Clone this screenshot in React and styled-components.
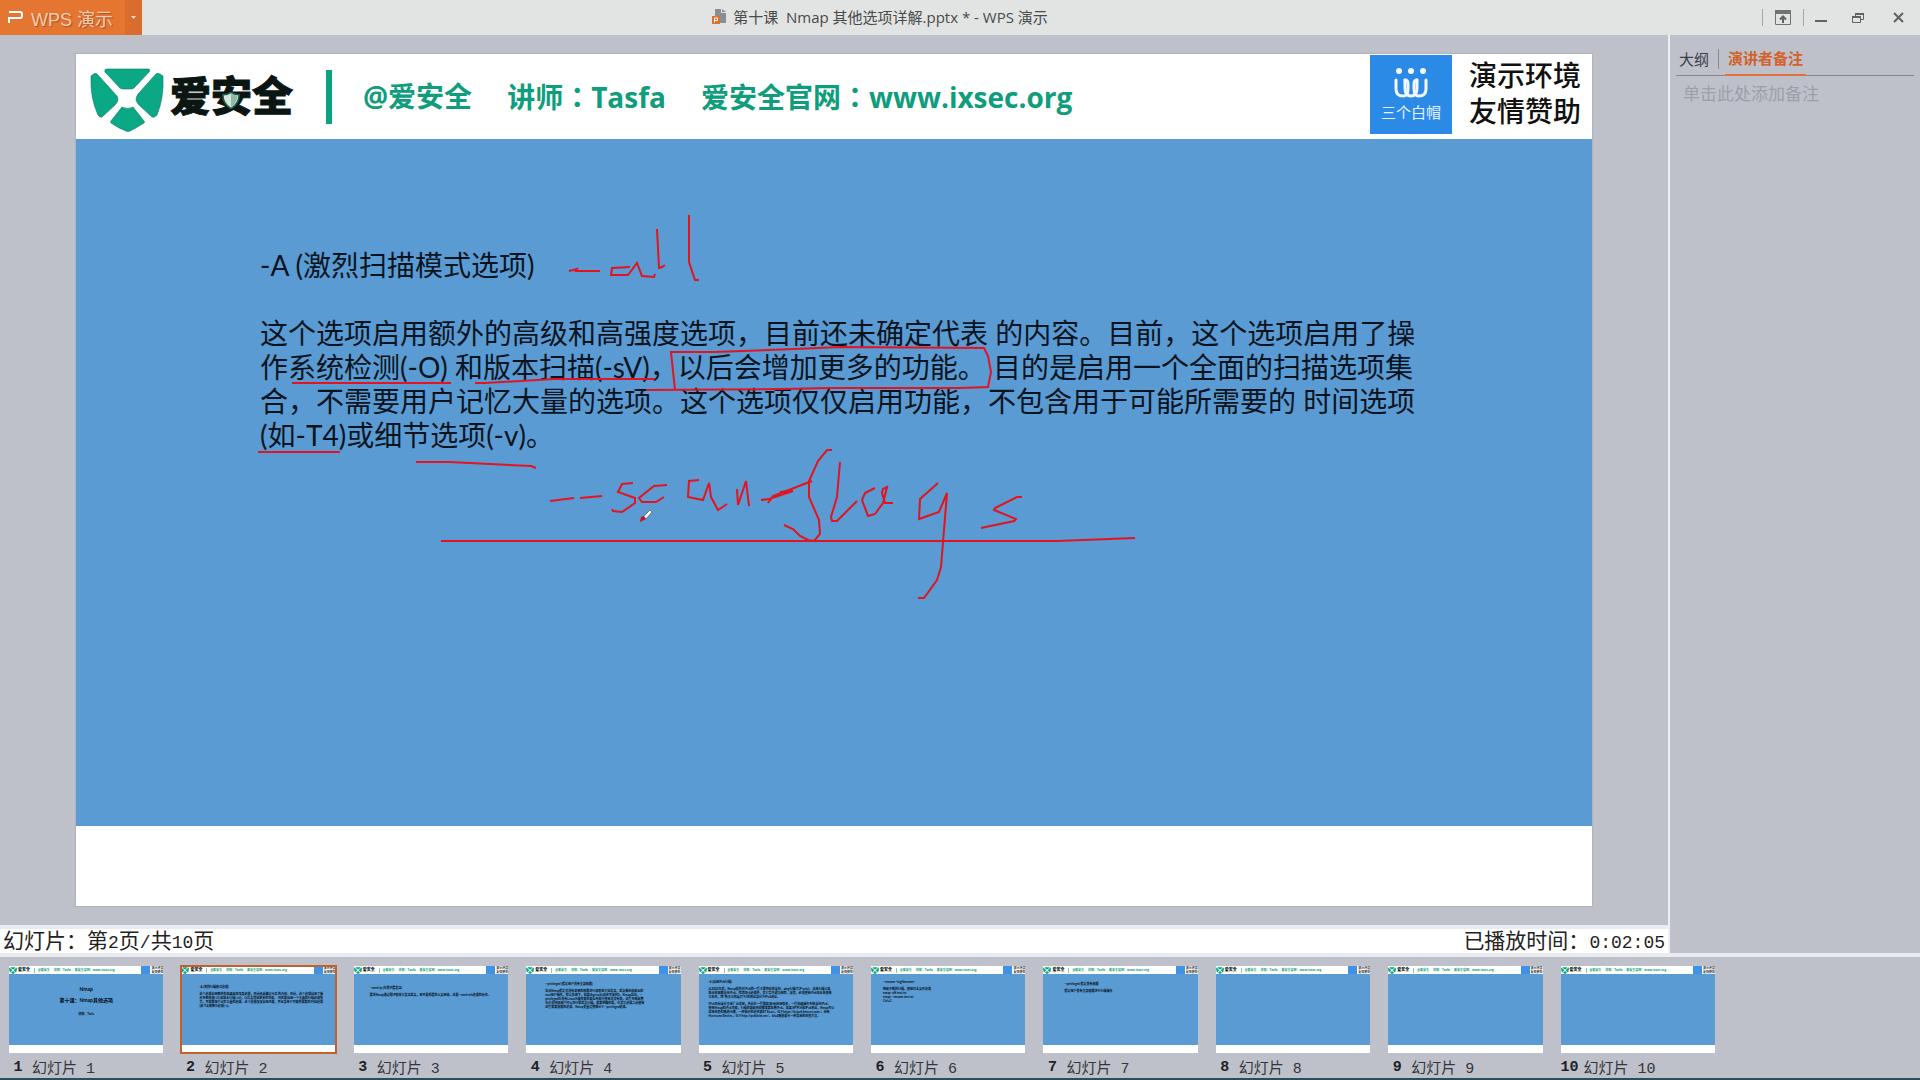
import { useState } from 'react';
import styled, { createGlobalStyle } from 'styled-components';

const GlobalStyle = createGlobalStyle`
  * {
    box-sizing: border-box;
  }
  body {
    margin: 0;
    background-color: #bec1ca;
    font-family: 'Open Sans', 'Noto Sans CJK SC', sans-serif;
  }
  button {
    padding: 0;
    border: none;
    background: none;
    font-family: inherit;
    color: inherit;
    cursor: pointer;
  }
  p, h1, h2 {
    margin: 0;
    font-weight: 400;
  }
`;

const Window = styled.div`
  min-height: 100vh;
  display: flex;
  flex-direction: column;
  border-bottom: 2px solid #2b4d5a;
`;

const TitleBar = styled.header`
  display: flex;
  align-items: stretch;
  height: 35px;
  background-color: #e1e4e3;
`;

const AppMenu = styled.div`
  display: flex;
  width: 142px;
  color: #f6cfb2;
  background-color: #e57632;
`;

const AppButton = styled.button`
  flex: 1;
  display: flex;
  align-items: center;
  gap: 8px;
  padding-left: 8px;
  font-family: 'Liberation Sans', 'Noto Sans CJK SC', sans-serif;
  font-size: 18px;
  white-space: nowrap;
  text-shadow: 1px 1px 1px #a9501c;
`;

const AppArrow = styled.button`
  width: 17px;
  display: flex;
  align-items: center;
  justify-content: center;
  background-color: #d96d2d;
`;

const FileTitle = styled.h1`
  flex: 1;
  display: flex;
  align-items: center;
  justify-content: center;
  gap: 7px;
  padding-bottom: 2px;
  font-size: 15px;
  color: #4a4a4a;
  white-space: pre;
`;

const WindowControls = styled.div`
  width: 302px;
  display: flex;
  align-items: center;
  justify-content: flex-end;
  padding-right: 2px;
`;

const ControlButton = styled.button`
  width: ${({ $narrow }) => ($narrow ? '34px' : '40px')};
  height: 24px;
  display: flex;
  align-items: center;
  justify-content: center;
`;

const ControlLine = styled.span`
  width: 1px;
  height: 17px;
  background-color: #a3a5a7;
`;

const Workspace = styled.div`
  flex: 1;
  display: flex;
`;

const MainColumn = styled.div`
  flex: 1;
  display: flex;
  flex-direction: column;
`;

const Stage = styled.main`
  flex: 1;
  display: flex;
  padding: 19px 76px;
`;

const Slide = styled.article`
  position: relative;
  flex: 1;
  display: flex;
  flex-direction: column;
  background-color: #ffffff;
  box-shadow: 0 0 1px 1px #b0b4be;
`;

const SlideHeader = styled.div`
  display: flex;
  align-items: center;
  height: 85px;
  padding: 0 11px 0 14px;
`;

const BrandMark = styled.span`
  display: flex;
  padding-top: 6px;
`;

const BrandName = styled.span`
  position: relative;
  margin: 0 33px 4px 6px;
  font-size: 41px;
  line-height: 56px;
  font-weight: 900;
  color: #0b1512;
  -webkit-text-stroke: 1px #0b1512;
`;

const BrandShield = styled.svg`
  position: absolute;
  left: 52px;
  top: 25px;
`;

const GreenBar = styled.span`
  width: 6px;
  height: 54px;
  background-color: #0aa37f;
`;

const TeacherInfo = styled.p`
  flex: 1;
  display: flex;
  gap: 35px;
  margin-left: 31px;
  font-size: 28px;
  line-height: 38px;
  font-weight: 700;
  color: #0f9d7c;
`;

/* full-width colon that sits in the middle of its cell */
const Colon = styled.span`
  font-family: 'Noto Sans CJK TC', sans-serif;
`;

const Sponsor = styled.div`
  align-self: flex-start;
  display: flex;
  gap: 17px;
  padding-top: 1px;
`;

const SponsorBadge = styled.div`
  width: 82px;
  height: 79px;
  display: flex;
  flex-direction: column;
  align-items: center;
  font-size: 15px;
  line-height: 20px;
  color: #e6f2ff;
  background-color: #2b8ae6;
`;

const SponsorText = styled.p`
  padding-top: 2px;
  font-size: 28px;
  line-height: 36px;
  font-weight: 500;
  color: #111111;
`;

const SlideBody = styled.div`
  flex: 1;
  padding: 109px 0 0 184px;
  font-family: Lato, 'Noto Sans CJK SC', sans-serif;
  font-size: 28px;
  line-height: 34px;
  font-weight: 300;
  color: #0a1420;
  background-color: #5a9bd3;
  white-space: nowrap;

  p + p {
    margin-top: 34px;
  }
`;

const SlideFooter = styled.div`
  height: 80px;
`;

const Ink = styled.svg`
  position: absolute;
  inset: 0;
  width: 100%;
  height: 100%;
  pointer-events: none;
`;

const StatusBar = styled.div`
  display: flex;
  align-items: center;
  justify-content: space-between;
  height: 32px;
  padding: 0 3px;
  border-top: 4px solid #e9ebf0;
  border-bottom: 4px solid #e9ebf0;
  font-family: 'Noto Sans CJK SC', sans-serif;
  font-size: 21px;
  line-height: 24px;
  color: #222222;
  background-color: #ffffff;
`;

const Digits = styled.span`
  font-family: 'Liberation Mono', monospace;
  font-size: 18px;
`;

const NotesPanel = styled.aside`
  width: 252px;
  display: flex;
  flex-direction: column;
  padding: 12px 6px 0 6px;
  border-left: 2px solid #eef0f5;
  border-bottom: 4px solid #e9ebf0;
`;

const Tabs = styled.div`
  display: flex;
  height: 29px;
  border-bottom: 1px solid #85888f;
`;

const Tab = styled.button`
  height: 29px;
  padding: 0 3px 5px;
  font-size: 15px;
  line-height: 22px;
  font-weight: ${({ $active }) => ($active ? 700 : 400)};
  color: ${({ $active }) => ($active ? '#d4602a' : '#3c3f45')};
  border-bottom: ${({ $active }) => ($active ? '2px solid #e0713c' : 'none')};
`;

const TabLine = styled.span`
  width: 1px;
  height: 20px;
  margin: 2px 6px 0;
  background-color: #85888f;
`;

const NotesInput = styled.textarea`
  flex: 1;
  padding: 5px 7px;
  border: none;
  outline: none;
  resize: none;
  background: none;
  font-family: 'Noto Sans CJK SC', sans-serif;
  font-size: 17px;
  line-height: 24px;
  color: #3c3f45;

  &::placeholder {
    color: #9c9fa7;
    opacity: 1;
  }
`;

const Strip = styled.nav`
  display: grid;
  grid-template-columns: repeat(10, 1fr);
  gap: 18px;
  padding: 9px 205px 0 9px;
`;

const ThumbButton = styled.button`
  display: block;
  text-align: left;
`;

const Thumb = styled.span`
  height: 87px;
  display: flex;
  flex-direction: column;
  overflow: hidden;
  background-color: #ffffff;
  outline: ${({ $active }) => ($active ? '2px solid #c4602c' : 'none')};
  outline-offset: -1px;
`;

const ThumbHeader = styled.span`
  height: 8px;
  display: flex;
  align-items: center;
  font-size: 3px;
  line-height: 4px;
  font-weight: 700;
  color: #0f9d7c;
  white-space: nowrap;
`;

const ThumbBrand = styled.span`
  margin: 0 4px 0 1px;
  font-size: 4px;
  font-weight: 900;
  color: #0b1512;
`;

const ThumbBar = styled.span`
  width: 1px;
  height: 5px;
  background-color: #7fcbb8;
`;

const ThumbInfo = styled.span`
  flex: 1;
  display: flex;
  gap: 4px;
  margin-left: 3px;
`;

const ThumbBadge = styled.span`
  width: 9px;
  height: 8px;
  background-color: #3f92e6;
`;

const ThumbSponsor = styled.span`
  width: 12px;
  margin-left: 1px;
  color: #333333;
`;

const ThumbBody = styled.span`
  flex: 1;
  display: flex;
  flex-direction: column;
  gap: 3px;
  padding: ${({ $top, $left }) => `${$top}px 0 0 ${$left}px`};
  font-family: Lato, 'Noto Sans CJK SC', sans-serif;
  font-size: 3px;
  line-height: 4px;
  font-weight: 700;
  color: #040a12;
  background-color: #5a9bd3;
  white-space: pre;
`;

const CoverBody = styled(ThumbBody)`
  gap: 5px;
  align-items: center;
  font-size: 5px;
  line-height: 6px;
`;

const CoverAuthor = styled.span`
  margin-top: 3px;
  font-size: 3px;
`;

const ThumbFooter = styled.span`
  height: 8px;
`;

const ThumbLabel = styled.span`
  display: flex;
  align-items: center;
  gap: 5px;
  height: 21px;
  margin-top: 4px;
  padding-bottom: 1px;
  font-family: 'Liberation Mono', 'Noto Sans CJK SC', monospace;
  font-size: 15px;
  color: #33363d;
  white-space: nowrap;
`;

const ThumbNumber = styled.b`
  width: 18px;
  text-align: center;
  color: #1f2228;
`;

const MAIN_TEXT = [
  ['-A (激烈扫描模式选项)'],
  [
    '这个选项启用额外的高级和高强度选项，目前还未确定代表 的内容。目前，这个选项启用了操',
    '作系统检测(-O) 和版本扫描(-sV)，以后会增加更多的功能。 目的是启用一个全面的扫描选项集',
    '合，不需要用户记忆大量的选项。这个选项仅仅启用功能，不包含用于可能所需要的 时间选项',
    '(如-T4)或细节选项(-v)。',
  ],
];

const SLIDES = [
  { cover: true, top: 12, left: 0 },
  { top: 11, left: 18, text: MAIN_TEXT },
  {
    top: 12,
    left: 16,
    text: [
      ['--send-ip (在原IP层发送)'],
      ['要求Nmap通过原IP套接字发送报文，而不是低层的以太网帧。这是--send-eth选项的补充。'],
    ],
  },
  {
    top: 8,
    left: 19,
    text: [
      ['--privileged (假定用户具有全部权限)'],
      [
        '告诉Nmap假定其具有足够的权限进行源套接字包发送、报文捕获和类似的',
        'root用户操作。默认状态下，如果由getuid()请求不返回0，Nmap退出。--',
        'privileged在具有Linux内核性能的类似系统中使用非常有效，这些系统配置',
        '允许非特权用户可以进行原报文扫描。需要明确的是，在其它选项之前使用',
        '这些需要权限的选项。Nmap变量设置等价于--privileged选项。',
      ],
    ],
  },
  {
    top: 6,
    left: 10,
    text: [
      ['-6 (启用IPv6扫描)'],
      [
        '从2002年起，Nmap提供对IPv6的一些主要特征的支持。ping扫描(TCP-only)、连接扫描以及',
        '版本检测都支持IPv6。除增加-6选项外，其它命令语法相同。当然，必须使用IPv6地址来替换',
        '主机名，除“所关注的端口”行的地址部分为IPv6地址。',
      ],
      [
        'IPv6目前未在全球广泛采用，目前在一些国家(亚洲)应用较多，一些高级操作系统支持IPv6。',
        '使用Nmap的IPv6功能，扫描的源和目的都需要配置IPv6。如果ISP不分配IPv6地址，Nmap可以',
        '采用免费的隧道代理。一种较好的选择是BT Exact，位于https://tb.ipv6.btexact.com/。还有',
        'Hurricane Electric，位于http://ipv6tb.he.net/。6to4隧道是另一种常用的免费方法。',
      ],
    ],
  },
  {
    top: 6,
    left: 12,
    text: [
      ['--resume <logfilename>'],
      ['继续中断的扫描，使用日志文件选项', 'nmap -oN test.txt', 'nmap --resume test.txt', 'Ctrl+C'],
    ],
  },
  {
    top: 8,
    left: 21,
    text: [['--privileged 假定具有权限'], ['假定用户具有全部权限进行扫描操作']],
  },
  { top: 0, left: 0, text: [] },
  { top: 0, left: 0, text: [] },
  { top: 0, left: 0, text: [] },
];

// pen strokes, one polyline for each, drawn on the 1516x852 slide
const STROKES = [
  '569,271 577,269 576,271 600,271',
  '630,267 612,268 611,275 628,275 637,263 642,276 654,277 655,274',
  '657,229 659,268 662,267 665,265',
  '689,215 689,262 695,280 699,280',
  '292,383 451,383',
  '475,383 485,383 554,379 655,379',
  '646,390 783,389 830,388 960,388 988,387 991,372 988,356 984,348 840,347 795,349 714,352 671,352 675,390',
  '258,452 340,452',
  '416,462 449,462 531,466 536,468',
  '550,501 574,498',
  '580,498 602,496',
  '633,483 622,484 618,492 635,498 635,503 622,512 613,511 612,509',
  '667,485 654,486 639,498 642,502 656,502 664,497',
  '699,480 689,481 688,497 703,500 709,483 711,497 718,510 727,504',
  '737,489 738,505 746,481 749,506',
  '761,500 769,499 793,491 780,492',
  '768,503 773,496 812,481',
  '832,450 827,450 818,461 809,481 809,497 819,520 820,534 814,541 808,540 800,536 793,529 784,525',
  '840,462 837,497 831,517 832,521 837,521 857,501',
  '875,488 865,493 862,500 868,516 875,514 883,503 887,487 883,489 882,493 885,503 893,503',
  '938,483 920,499 919,519 939,512 947,493 941,567 937,580 924,598 918,598',
  '1022,497 1017,497 995,508 994,510 1016,519 1014,521 981,528',
  '441,541 1057,541 1135,538',
];

const BrandLogo = ({ width, height }) => (
  <svg width={width} height={height} viewBox="90 68 74 64" aria-hidden="true">
    <g fill="#0aa884" stroke="#08795f" strokeWidth="0.6">
      <path d="M107 69H148Q151 69 149 72L134 88Q133 89 131 89H123Q121 89 120 88L105 72Q104 69 107 69Z" />
      <path d="M91 76Q95 72 97 74L117 96Q118 98 118 100Q117 103 115 105L102 117Q100 118 98 115Q90 98 91 76Z" />
      <path d="M163 76Q158 72 156 74L138 94Q136 97 136 100Q137 103 139 105L152 117Q154 118 157 115Q164 98 163 76Z" />
      <path d="M122 107Q128 110 133 107L144 121Q145 122 144 123Q136 128 130 131Q128 132 126 131Q118 128 111 123Q110 122 111 121Z" />
    </g>
  </svg>
);

const SlideThumb = ({ slide, number, active, onSelect }) => (
  <ThumbButton
    type="button"
    onClick={onSelect}
    aria-current={active ? 'page' : undefined}
  >
    <Thumb $active={active}>
      <ThumbHeader>
        <BrandLogo width={8} height={7} />
        <ThumbBrand>爱安全</ThumbBrand>
        <ThumbBar />
        <ThumbInfo>
          <span>@爱安全</span>
          <span>讲师：Tasfa</span>
          <span>爱安全官网：www.ixsec.org</span>
        </ThumbInfo>
        <ThumbBadge />
        <ThumbSponsor>
          演示环境
          <br />
          友情赞助
        </ThumbSponsor>
      </ThumbHeader>
      {slide.cover ? (
        <CoverBody $top={slide.top} $left={slide.left}>
          <span>Nmap</span>
          <span>第十课：Nmap其他选项</span>
          <CoverAuthor>讲师：Tasfa</CoverAuthor>
        </CoverBody>
      ) : (
        <ThumbBody $top={slide.top} $left={slide.left}>
          {slide.text.map(lines => (
            <span key={lines[0]}>{lines.join('\n')}</span>
          ))}
        </ThumbBody>
      )}
      <ThumbFooter />
    </Thumb>
    <ThumbLabel>
      <ThumbNumber>{number}</ThumbNumber>
      幻灯片 {number}
    </ThumbLabel>
  </ThumbButton>
);

const App = () => {
  const [current, setCurrent] = useState(1);
  const [notes, setNotes] = useState('');

  return (
    <Window>
      <GlobalStyle />
      <TitleBar>
        <AppMenu>
          <AppButton type="button">
            <svg width="15" height="13" viewBox="0 0 15 13" aria-hidden="true">
              <path
                d="M1 1H12Q14 1 14 3V5Q14 7 12 7H1V12"
                fill="none"
                stroke="#ffffff"
                strokeWidth="2"
              />
            </svg>
            WPS 演示
          </AppButton>
          <AppArrow type="button" aria-label="WPS 演示">
            <svg width="5" height="3" viewBox="0 0 5 3" aria-hidden="true">
              <path d="M0 0H5L2.5 3Z" fill="#f9dcc8" />
            </svg>
          </AppArrow>
        </AppMenu>
        <FileTitle>
          <svg width="14" height="15" viewBox="0 0 14 15" aria-hidden="true">
            <path d="M3 0H9V4H14V14H3Z" fill="#8b8d90" />
            <path d="M10 0L14 3H10Z" fill="#8b8d90" />
            <path d="M0 7H8V15H0Z" fill="#d9722f" />
            <path d="M2.5 13.5V9H5.5V11.5H2.5" fill="none" stroke="#ffffff" />
          </svg>
          第十课  Nmap 其他选项详解.pptx * - WPS 演示
        </FileTitle>
        <WindowControls>
          <ControlLine />
          <ControlButton type="button" aria-label="功能区">
            <svg width="16" height="15" viewBox="0 0 16 15" aria-hidden="true">
              <path d="M.5 .5H15.5V14.5H.5Z" fill="none" stroke="#707274" />
              <path d="M0 0H16V4H0Z" fill="#707274" />
              <path d="M8 13V7M5 9.5L8 6.5L11 9.5" fill="none" stroke="#606264" strokeWidth="2" />
            </svg>
          </ControlButton>
          <ControlLine />
          <ControlButton $narrow type="button" aria-label="最小化">
            <svg width="12" height="12" viewBox="0 0 12 12" aria-hidden="true">
              <path d="M0 9H12" stroke="#606264" strokeWidth="2" />
            </svg>
          </ControlButton>
          <ControlButton type="button" aria-label="还原">
            <svg width="12" height="10" viewBox="0 0 12 10" aria-hidden="true">
              <path d="M.5 4H8.5V9.5H.5ZM3.5 3V1H11.5V6.5H9" fill="none" stroke="#606264" />
              <path d="M0 4H9M3 1H12" stroke="#606264" strokeWidth="2" />
            </svg>
          </ControlButton>
          <ControlButton type="button" aria-label="关闭">
            <svg width="11" height="11" viewBox="0 0 11 11" aria-hidden="true">
              <path d="M1 1L10 10M10 1L1 10" stroke="#606264" strokeWidth="2" />
            </svg>
          </ControlButton>
        </WindowControls>
      </TitleBar>

      <Workspace>
        <MainColumn>
          <Stage>
            <Slide>
              <SlideHeader>
                <BrandMark>
                  <BrandLogo width={74} height={64} />
                </BrandMark>
                <BrandName>
                  爱安全
                  <BrandShield width="18" height="17" viewBox="0 0 22 20" aria-hidden="true">
                    <path
                      d="M1 3Q7 3 11 0Q15 3 21 3Q21 14 11 20Q1 14 1 3Z"
                      fill="#d5e6dd"
                      stroke="#1c5a46"
                      strokeWidth="2"
                    />
                    <path d="M11 2Q15 4 19 4Q19 13 11 18Z" fill="#8fb9a6" />
                  </BrandShield>
                </BrandName>
                <GreenBar />
                <TeacherInfo>
                  <span>@爱安全</span>
                  <span>
                    讲师<Colon>：</Colon>Tasfa
                  </span>
                  <span>
                    爱安全官网<Colon>：</Colon>www.ixsec.org
                  </span>
                </TeacherInfo>
                <Sponsor>
                  <SponsorBadge>
                    <svg width="82" height="47" viewBox="0 0 82 47" aria-hidden="true">
                      <g fill="#f2f8ff">
                        <circle cx="29" cy="16" r="3" />
                        <circle cx="41" cy="16" r="3" />
                        <circle cx="53" cy="16" r="3" />
                      </g>
                      <g fill="none" stroke="#f2f8ff" strokeWidth="3" strokeLinecap="round">
                        <path d="M26 25V34Q26 41 33 41Q38 41 38 34V29Q38 25 35 25" />
                        <path d="M35 25V33Q35 41 41 41Q47 41 47 33V25" />
                        <path d="M47 25Q44 25 44 29V34Q44 41 49 41Q56 41 56 34V25" />
                      </g>
                    </svg>
                    三个白帽
                  </SponsorBadge>
                  <SponsorText>
                    演示环境
                    <br />
                    友情赞助
                  </SponsorText>
                </Sponsor>
              </SlideHeader>
              <SlideBody>
                {MAIN_TEXT.map(lines => (
                  <p key={lines[0]}>
                    {lines.map(line => (
                      <span key={line}>
                        {line}
                        <br />
                      </span>
                    ))}
                  </p>
                ))}
              </SlideBody>
              <SlideFooter />
              <Ink viewBox="76 54 1516 852" aria-hidden="true">
                <g fill="none" stroke="#e3141f" strokeWidth="2">
                  {STROKES.map(points => (
                    <polyline key={points} points={points} />
                  ))}
                </g>
                <path d="M643 517L650 510L652 512L646 519Z" fill="#ffffff" stroke="#5b4a4a" strokeWidth="0.7" />
                <path d="M640 522L641 517L644 516L646 519Z" fill="#c4121c" />
              </Ink>
            </Slide>
          </Stage>
          <StatusBar>
            <span>
              幻灯片：第<Digits>{current + 1}</Digits>页<Digits>/</Digits>共
              <Digits>{SLIDES.length}</Digits>页
            </span>
            <span>
              已播放时间：<Digits>0:02:05</Digits>
            </span>
          </StatusBar>
        </MainColumn>
        <NotesPanel>
          <Tabs>
            <Tab type="button">大纲</Tab>
            <TabLine />
            <Tab type="button" $active>
              演讲者备注
            </Tab>
          </Tabs>
          <NotesInput
            aria-label="演讲者备注"
            placeholder="单击此处添加备注"
            value={notes}
            onChange={event => setNotes(event.target.value)}
          />
        </NotesPanel>
      </Workspace>

      <Strip>
        {SLIDES.map((slide, index) => (
          <SlideThumb
            key={index}
            slide={slide}
            number={index + 1}
            active={index === current}
            onSelect={() => setCurrent(index)}
          />
        ))}
      </Strip>
    </Window>
  );
};

export default App;
